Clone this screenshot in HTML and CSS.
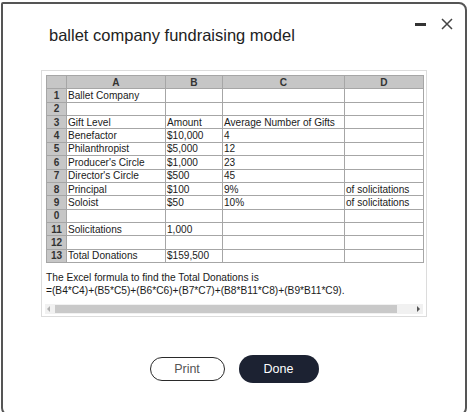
FILE: index.html
```html
<!DOCTYPE html>
<html>
<head>
<meta charset="utf-8">
<link rel="stylesheet" href="styles.css">
</head>
<body>
<div class="modal">
  <div class="header">
    <h1 class="title">ballet company fundraising model</h1>
    <div class="controls">
      <span class="minimize"></span>
      <svg class="close" width="12" height="12" viewBox="0 0 12 12"><path d="M1 1L11 11M11 1L1 11" stroke="#444" stroke-width="1.5" fill="none"/></svg>
    </div>
  </div>
  <div class="panel">
    <table class="sheet">
      <colgroup><col class="c0"><col class="ca"><col class="cb"><col class="cc"><col class="cd"></colgroup>
      <tr class="colhead"><th></th><th>A</th><th>B</th><th>C</th><th>D</th></tr>
      <tr><th>1</th><td>Ballet Company</td><td></td><td></td><td></td></tr>
      <tr><th>2</th><td></td><td></td><td></td><td></td></tr>
      <tr><th>3</th><td>Gift Level</td><td>Amount</td><td>Average Number of Gifts</td><td></td></tr>
      <tr><th>4</th><td>Benefactor</td><td>$10,000</td><td>4</td><td></td></tr>
      <tr><th>5</th><td>Philanthropist</td><td>$5,000</td><td>12</td><td></td></tr>
      <tr><th>6</th><td>Producer's Circle</td><td>$1,000</td><td>23</td><td></td></tr>
      <tr><th>7</th><td>Director's Circle</td><td>$500</td><td>45</td><td></td></tr>
      <tr><th>8</th><td>Principal</td><td>$100</td><td>9%</td><td>of solicitations</td></tr>
      <tr><th>9</th><td>Soloist</td><td>$50</td><td>10%</td><td>of solicitations</td></tr>
      <tr><th>0</th><td></td><td></td><td></td><td></td></tr>
      <tr><th>11</th><td>Solicitations</td><td>1,000</td><td></td><td></td></tr>
      <tr><th>12</th><td></td><td></td><td></td><td></td></tr>
      <tr><th>13</th><td>Total Donations</td><td>$159,500</td><td></td><td></td></tr>
    </table>
    <p class="note">The Excel formula to find the Total Donations is<br>=(B4*C4)+(B5*C5)+(B6*C6)+(B7*C7)+(B8*B11*C8)+(B9*B11*C9).</p>
    <div class="hscroll">
      <span class="arrow left"></span>
      <span class="thumb"></span>
      <span class="arrow right"></span>
    </div>
  </div>
  <div class="actions">
    <button class="btn print">Print</button>
    <button class="btn done">Done</button>
  </div>
</div>
</body>
</html>
```
FILE: styles.css
```css
html, body {
  margin: 0;
  padding: 0;
  overflow: hidden;
  background: #fff;
  font-family: "Liberation Sans", Arial, sans-serif;
}

.modal {
  margin: 2px 0 0 1px;
  width: 466px;
  height: 414px;
  box-sizing: border-box;
  border: 2px solid #555;
  border-radius: 2px 8px 8px 8px;
  background: #fff;
}

.header {
  height: 66px;
  display: flex;
  justify-content: space-between;
  align-items: flex-start;
  padding: 0 12px 0 46px;
}

.title {
  margin: 21px 0 0 0;
  font-size: 16.5px;
  line-height: 20px;
  font-weight: normal;
  color: #222;
}

.controls {
  margin-top: 14px;
  display: flex;
  align-items: center;
  gap: 15px;
  height: 12px;
}

.minimize {
  display: block;
  width: 11px;
  height: 3px;
  background: #333;
  margin-top: 1px;
}

.close {
  display: block;
}

.panel {
  margin-left: 38px;
  width: 386px;
  box-sizing: border-box;
  border: 1px solid #dcdcdc;
  padding: 4px 3px 2px 4px;
}

.sheet {
  border-collapse: collapse;
  table-layout: fixed;
  width: 377px;
  font-size: 10.1px;
  color: #1a1a1a;
}

.c0 { width: 20px; }
.ca { width: 99px; }
.cb { width: 57px; }
.cc { width: 122px; }
.cd { width: 79px; }

.sheet tr {
  height: 13.36px;
}

.sheet td, .sheet th {
  border: 1px solid #a6a6a6;
  padding: 0 1px;
  line-height: 11px;
  white-space: nowrap;
  overflow: hidden;
  text-align: left;
  font-weight: normal;
}

.sheet th {
  background: #c6c6c6;
  text-align: center;
  font-weight: bold;
  color: #333;
}

.note {
  margin: 9px 0 0 0;
  font-size: 10.2px;
  line-height: 12.5px;
  color: #1a1a1a;
}

.hscroll {
  margin: 7px 0 0 -1px;
  width: 378px;
  height: 10px;
  background: #f1f1f1;
  display: flex;
  align-items: center;
}

.arrow {
  width: 0;
  height: 0;
  border-top: 3px solid transparent;
  border-bottom: 3px solid transparent;
}

.arrow.left {
  margin-left: 2px;
  border-right: 3px solid #b0b0b0;
}

.arrow.right {
  margin-left: 20px;
  border-left: 3px solid #555;
}

.thumb {
  margin-left: 5px;
  width: 342px;
  height: 8px;
  background: #c9c9c9;
}

.actions {
  margin-top: 38px;
  display: flex;
  justify-content: center;
  align-items: center;
  gap: 14px;
}

.btn {
  font-family: "Liberation Sans", Arial, sans-serif;
  font-size: 12.5px;
  box-sizing: border-box;
  cursor: pointer;
}

.print {
  width: 75px;
  height: 24px;
  border: 1.5px solid #2a2a2a;
  border-radius: 12px;
  background: #fff;
  color: #555;
}

.done {
  width: 80px;
  height: 28px;
  border: none;
  border-radius: 14px;
  background: #1c2232;
  color: #fff;
}
```
